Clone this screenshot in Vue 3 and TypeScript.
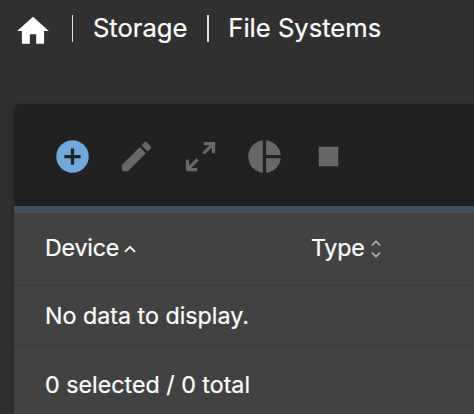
<script setup lang="ts">
interface Action {
  name: string
  path: string
  active?: boolean
}

const crumbs: string[] = ['Storage', 'File Systems']

const actions: Action[] = [
  { name: 'create', active: true, path: 'M17,13H13V17H11V13H7V11H11V7H13V11H17M12,2A10,10 0 0,0 2,12A10,10 0 0,0 12,22A10,10 0 0,0 22,12A10,10 0 0,0 12,2Z' },
  { name: 'edit', path: 'M20.71,7.04C21.1,6.65 21.1,6 20.71,5.63L18.37,3.29C18,2.9 17.35,2.9 16.96,3.29L15.12,5.12L18.87,8.87M3,17.25V21H6.75L17.81,9.93L14.06,6.18L3,17.25Z' },
  { name: 'resize', path: 'M10,21V19H6.41L10.91,14.5L9.5,13.09L5,17.59V14H3V21H10M14.5,10.91L19,6.41V10H21V3H14V5H17.59L13.09,9.5L14.5,10.91Z' },
  { name: 'quota', path: 'M11,2V22C5.9,21.5 2,17.2 2,12C2,6.8 5.9,2.5 11,2M13,2V11H22C21.5,6.2 17.8,2.5 13,2M13,13V22C17.7,21.5 21.5,17.8 22,13H13Z' },
  { name: 'unmount', path: 'M18,18H6V6H18V18Z' },
]
const selected = 0
const total = 0
</script>

<template>
  <div class="page">
    <nav class="breadcrumb">
      <svg class="home" viewBox="0 0 24 24"><path d="M10,20V14H14V20H19V12H22L12,3L2,12H5V20H10Z" /></svg>
      <template v-for="crumb in crumbs" :key="crumb">
        <span class="divider"></span>
        <span class="crumb">{{ crumb }}</span>
      </template>
    </nav>
    <main class="panel">
      <div class="toolbar">
        <button v-for="a in actions" :key="a.name" class="action" :class="{ active: a.active }">
          <svg viewBox="0 0 24 24"><path :d="a.path" /></svg>
        </button>
      </div>
      <div class="stripe"></div>
      <div class="row head">
        <div class="col device">
          <span class="label">Device</span>
          <svg class="asc" viewBox="0 0 12 8"><path d="M1 6.8L6 1.8L11 6.8" /></svg>
        </div>
        <div class="col">
          <span class="label">Type</span>
          <svg class="sort" viewBox="0 0 10 18"><path d="M1 5.3L5 1.3L9 5.3M1 12.7L5 16.7L9 12.7" /></svg>
        </div>
      </div>
      <div class="row empty"><span>No data to display.</span></div>
      <div class="row footer"><span>{{ selected }} selected / {{ total }} total</span></div>
    </main>
  </div>
</template>

<style>
body {
  background: #303030;
}
</style>

<style scoped>
.page {
  box-sizing: border-box;
  height: 414px;
  overflow: hidden;
  display: flex;
  flex-direction: column;
  background: #303030;
  color: #fff;
  font-family: Inter, "Liberation Sans", sans-serif;
  -webkit-text-stroke: 0.2px #fff;
}
.breadcrumb {
  box-sizing: border-box;
  flex: none;
  height: 104px;
  padding: 11px 0 0 14px;
  display: flex;
  align-items: flex-start;
}
.home {
  width: 38px;
  height: 38px;
  margin-top: 1px;
  fill: #fff;
  flex: none;
}
.divider {
  width: 1.5px;
  height: 27px;
  margin: 4px 19.5px 0 19.9px;
  background: #e0e0e0;
}
.crumb {
  font-size: 25.6px;
  line-height: 33px;
  white-space: nowrap;
}
.panel {
  flex: 1;
  margin-left: 14px;
  display: flex;
  flex-direction: column;
  background: #424242;
  border-top-left-radius: 6px;
  overflow: hidden;
  box-shadow: 0 1px 5px rgba(0, 0, 0, 0.35);
}
.toolbar {
  box-sizing: border-box;
  flex: none;
  height: 102px;
  padding: 2px 0 0 38.5px;
  display: flex;
  align-items: center;
  gap: 25.1px;
  background: #212121;
}
.action {
  width: 39px;
  height: 39px;
  padding: 0;
  border: 0;
  background: none;
  fill: #676767;
}
.action svg {
  display: block;
}
.active {
  fill: #6fa9dc;
}
.stripe {
  flex: none;
  height: 7px;
  background: #42505c;
}
.row {
  box-sizing: border-box;
  flex: none;
  display: flex;
  align-items: center;
  padding-left: 31px;
  font-size: 23.25px;
  line-height: 30px;
  white-space: nowrap;
}
.head {
  height: 73px;
  padding-bottom: 2px;
  border-bottom: 1px solid #3a3a3a;
}
.col {
  display: flex;
  align-items: center;
}
.device {
  width: 266px;
}
.label {
  letter-spacing: -0.2px;
}
.asc,
.sort {
  flex: none;
  fill: none;
  stroke: #fff;
  stroke-width: 1.9;
}
.asc {
  width: 12px;
  height: 8px;
  margin: 2px 0 0 5.2px;
}
.sort {
  width: 10px;
  height: 18px;
  margin: 1px 0 0 6.6px;
  stroke: #a8a8a8;
  stroke-width: 1.8;
}
.empty {
  height: 60px;
  border-bottom: 1px solid #3a3a3a;
}
.footer {
  height: 77px;
}
</style>
